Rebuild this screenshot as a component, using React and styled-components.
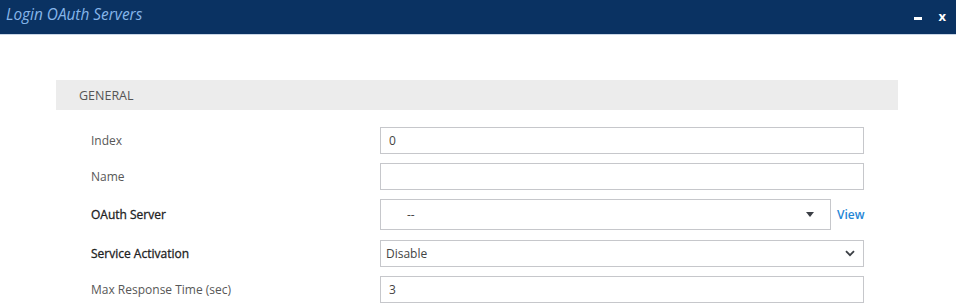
import React from "react";
import styled, { createGlobalStyle } from "styled-components";

const GlobalStyle = createGlobalStyle`
  body {
    margin: 0;
    background: #fff;
    font-family: "Open Sans", "Liberation Sans", sans-serif;
  }
`;

function App() {
  return (
    <>
      <GlobalStyle />
      <Window>
        <TitleBar>
          <Title>Login OAuth Servers</Title>
          <WinButtons>
            <MinBtn aria-label="minimize" />
            <CloseBtn>x</CloseBtn>
          </WinButtons>
        </TitleBar>
        <Content>
          <SectionHead>GENERAL</SectionHead>
          <Form>
            <Row>
              <Label>Index</Label>
              <TextInput defaultValue="0" />
            </Row>
            <Row>
              <Label>Name</Label>
              <TextInput defaultValue="" />
            </Row>
            <Row $tall>
              <Label $strong>OAuth Server</Label>
              <Control>
                <Dropdown>
                  <span>--</span>
                  <Caret viewBox="0 0 8 5">
                    <path d="M0 0h8L4 5z" fill="#3b3f45" />
                  </Caret>
                </Dropdown>
                <ViewLink href="#">View</ViewLink>
              </Control>
            </Row>
            <Row>
              <Label $strong>Service Activation</Label>
              <SelectBox>
                <span>Disable</span>
                <Chevron viewBox="0 0 10 7">
                  <path
                    d="M1 1.2l4 4 4-4"
                    fill="none"
                    stroke="#3b3f45"
                    strokeWidth="1.8"
                  />
                </Chevron>
              </SelectBox>
            </Row>
            <Row>
              <Label>Max Response Time (sec)</Label>
              <TextInput defaultValue="3" />
            </Row>
          </Form>
        </Content>
      </Window>
    </>
  );
}

export default App;

const Window = styled.div`
  width: 956px;
  height: 308px;
  overflow: hidden;
  background: #fff;
`;

const TitleBar = styled.div`
  height: 34px;
  background: #0a3262;
  border-bottom: 1px solid #c9d6e6;
  display: flex;
  align-items: center;
  justify-content: space-between;
  padding: 0 10px 0 6px;
`;

const Title = styled.div`
  font-style: italic;
  font-size: 15.4px;
  color: #86b6ea;
  margin-top: -5px;
`;

const WinButtons = styled.div`
  display: flex;
  align-items: center;
  gap: 16px;
  margin-top: 2px;
`;

const MinBtn = styled.div`
  width: 8px;
  height: 3px;
  background: #fff;
`;

const CloseBtn = styled.div`
  color: #fff;
  font-weight: 700;
  font-size: 13px;
  line-height: 1;
  margin-top: -3px;
`;

const Content = styled.div`
  padding: 45px 58px 0 56px;
`;

const SectionHead = styled.div`
  height: 30px;
  background: #ececec;
  padding-left: 23px;
  display: flex;
  align-items: center;
  font-size: 12.5px;
  color: #555;
`;

const Form = styled.div`
  display: flex;
  flex-direction: column;
  gap: 9px;
  padding: 17px 0 0 35px;
`;

const Row = styled.div`
  display: flex;
  align-items: center;
  height: ${(p) => (p.$tall ? "31px" : "27px")};
  margin-bottom: ${(p) => (p.$tall ? "1px" : "0")};
`;

const Label = styled.div`
  width: 289px;
  flex-shrink: 0;
  font-size: 12px;
  color: ${(p) => (p.$strong ? "#222" : "#575757")};
  -webkit-text-stroke: ${(p) => (p.$strong ? "0.3px #222" : "0")};
`;

const TextInput = styled.input`
  box-sizing: border-box;
  width: 484px;
  height: 27px;
  border: 1px solid #c6c7cb;
  padding: 0 8px;
  font-family: "Open Sans", "Liberation Sans", sans-serif;
  font-size: 12px;
  color: #444;
  outline: none;
`;

const Control = styled.div`
  display: flex;
  align-items: center;
  gap: 6px;
`;

const Dropdown = styled.div`
  box-sizing: border-box;
  width: 451px;
  height: 31px;
  border: 1px solid #c6c7cb;
  display: flex;
  align-items: center;
  justify-content: space-between;
  padding: 0 16px 0 26px;
  font-size: 12px;
  color: #444;
`;

const Caret = styled.svg`
  width: 8px;
  height: 5px;
`;

const ViewLink = styled.a`
  color: #1f86d6;
  font-weight: 600;
  font-size: 12px;
  text-decoration: none;
`;

const SelectBox = styled.div`
  box-sizing: border-box;
  width: 484px;
  height: 27px;
  border: 1px solid #c6c7cb;
  display: flex;
  align-items: center;
  justify-content: space-between;
  padding: 0 8px 0 5px;
  font-size: 12px;
  color: #444;
`;

const Chevron = styled.svg`
  width: 10px;
  height: 7px;
`;
